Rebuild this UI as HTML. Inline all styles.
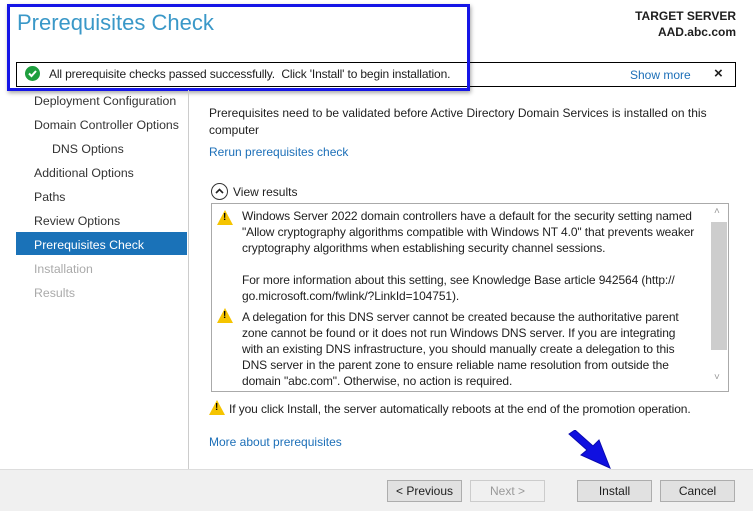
<!DOCTYPE html>
<html><head><style>
body{margin:0;width:753px;height:510px;background:#fff;font-family:"Liberation Sans",sans-serif;font-size:12px;color:#1e1e1e;position:relative;overflow:hidden}
.a{position:absolute;white-space:nowrap}
.nav{position:absolute;left:34px;font-size:12.3px;color:#333}
.btn{position:absolute;top:480px;height:20px;border:1px solid #adadad;background:#e1e1e1;text-align:center;line-height:20px;font-size:12px}
.tri{position:absolute;width:0;height:0;border-left:8px solid transparent;border-right:8px solid transparent;border-bottom:15px solid #f5c400}
.tri:after{content:"!";position:absolute;left:-2px;top:2px;font-size:10px;font-weight:bold;color:#000}
.t{position:absolute;left:242px;line-height:16px;white-space:nowrap;font-size:12px;letter-spacing:-0.1px}
</style></head><body>
<div class="a" style="left:17px;top:10px;font-size:22px;color:#3a98c8">Prerequisites Check</div>
<div class="a" style="right:17px;top:8px;text-align:right;font-weight:bold;font-size:12px;line-height:16px">TARGET SERVER<br>AAD.abc.com</div>
<div style="position:absolute;left:16px;top:62px;width:718px;height:23px;border:1px solid #000;background:#fff"></div>
<div style="position:absolute;left:25px;top:66px;width:15px;height:15px;border-radius:50%;background:#1e9e3e"><svg width="15" height="15"><path d="M4 7.5l2.5 2.5 4.5-5" stroke="#fff" stroke-width="2" fill="none"/></svg></div>
<div class="a" style="left:49px;top:67px;letter-spacing:-0.15px">All prerequisite checks passed successfully.&nbsp; Click 'Install' to begin installation.</div>
<div class="a" style="left:630px;top:68px;color:#1c6fb8">Show more</div>
<div class="a" style="left:714px;top:65px;font-size:15px;font-weight:bold">×</div>
<div style="position:absolute;left:7px;top:4px;width:457px;height:81px;border:3px solid #1515e6;box-shadow:1px 2px 4px rgba(0,0,0,.35)"></div>
<div style="position:absolute;left:188px;top:90px;width:1px;height:379px;background:#ccc"></div>
<div class="nav" style="top:94px">Deployment Configuration</div>
<div class="nav" style="top:118px">Domain Controller Options</div>
<div class="nav" style="top:142px;left:52px">DNS Options</div>
<div class="nav" style="top:166px">Additional Options</div>
<div class="nav" style="top:190px">Paths</div>
<div class="nav" style="top:214px">Review Options</div>
<div style="position:absolute;left:16px;top:232px;width:171px;height:23px;background:#1a72b8"></div>
<div class="nav" style="top:238px;color:#fff">Prerequisites Check</div>
<div class="nav" style="top:262px;color:#aaa">Installation</div>
<div class="nav" style="top:286px;color:#aaa">Results</div>
<div class="a" style="left:209px;top:105px;line-height:17px">Prerequisites need to be validated before Active Directory Domain Services is installed on this<br>computer</div>
<div class="a" style="left:209px;top:145px;color:#1c6fb8">Rerun prerequisites check</div>
<div style="position:absolute;left:211px;top:183px;width:15px;height:15px;border:1px solid #333;border-radius:50%"><svg width="15" height="15"><path d="M4 9l3.5-3.5 3.5 3.5" stroke="#222" stroke-width="1.6" fill="none"/></svg></div>
<div class="a" style="left:233px;top:185px">View results</div>
<div style="position:absolute;left:211px;top:203px;width:516px;height:187px;border:1px solid #aaa;background:#fff"></div>
<div style="position:absolute;left:711px;top:222px;width:16px;height:128px;background:#cdcdcd"></div>
<div class="a" style="left:714px;top:206px;color:#999;font-size:10px">˄</div>
<div class="a" style="left:714px;top:372px;color:#999;font-size:10px">˅</div>
<div class="tri" style="left:217px;top:210px"></div>
<div class="t" style="top:208px">Windows Server 2022 domain controllers have a default for the security setting named<br>"Allow cryptography algorithms compatible with Windows NT 4.0" that prevents weaker<br>cryptography algorithms when establishing security channel sessions.<br><br>For more information about this setting, see Knowledge Base article 942564 (http://<br>go.microsoft.com/fwlink/?LinkId=104751).</div>
<div class="tri" style="left:217px;top:308px"></div>
<div class="t" style="top:309px">A delegation for this DNS server cannot be created because the authoritative parent<br>zone cannot be found or it does not run Windows DNS server. If you are integrating<br>with an existing DNS infrastructure, you should manually create a delegation to this<br>DNS server in the parent zone to ensure reliable name resolution from outside the<br>domain "abc.com". Otherwise, no action is required.</div>
<div class="tri" style="left:209px;top:400px"></div>
<div class="a" style="left:229px;top:402px;letter-spacing:-0.1px">If you click Install, the server automatically reboots at the end of the promotion operation.</div>
<div class="a" style="left:209px;top:435px;color:#1c6fb8">More about prerequisites</div>
<div style="position:absolute;left:0;top:469px;width:753px;height:41px;background:#f0f0f0;border-top:1px solid #ddd"></div>
<div class="btn" style="left:387px;width:73px">&lt; Previous</div>
<div class="btn" style="left:470px;width:73px;background:#f0f0f0;border-color:#ccc;color:#999">Next &gt;</div>
<div class="btn" style="left:577px;width:73px">Install</div>
<div class="btn" style="left:660px;width:73px">Cancel</div>
<svg style="position:absolute;left:565px;top:430px" width="50" height="45"><path d="M4 4 L22 20 L16 25 L45 38 L34 10 L28 16 L10 0 Z" fill="#1010e0" stroke="#0a0ab0"/></svg>
</body></html>
